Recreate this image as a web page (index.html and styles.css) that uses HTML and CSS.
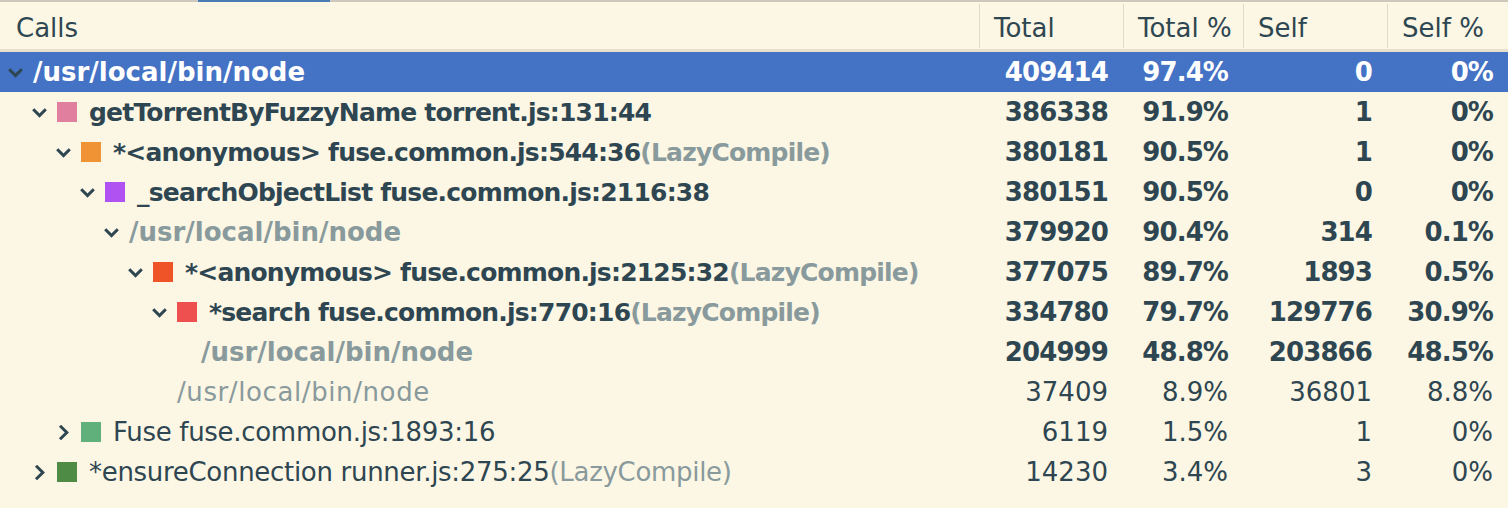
FILE: index.html
```html
<!DOCTYPE html>
<html>
<head>
<meta charset="utf-8">
<link rel="stylesheet" href="styles.css">
</head>
<body>
<div class="topbar"><div class="tab-ind"></div></div>
<div class="table">
  <div class="row head">
    <div class="cell calls">Calls</div>
    <div class="cell hnum">Total</div>
    <div class="cell hnum">Total %</div>
    <div class="cell hnum">Self</div>
    <div class="cell hnum">Self %</div>
  </div>

  <div class="row sel bold">
    <div class="cell calls l0"><svg class="chev" viewBox="0 0 15 15"><polyline points="1.2,4.3 7.5,10.6 13.8,4.3"/></svg><span class="name path">/usr/local/bin/node</span></div>
    <div class="cell num">409414</div><div class="cell num">97.4%</div><div class="cell num">0</div><div class="cell num">0%</div>
  </div>

  <div class="row bold">
    <div class="cell calls l1"><svg class="chev" viewBox="0 0 15 15"><polyline points="1.2,4.3 7.5,10.6 13.8,4.3"/></svg><span class="sq pink"></span><span class="name">getTorrentByFuzzyName torrent.js:131:44</span></div>
    <div class="cell num">386338</div><div class="cell num">91.9%</div><div class="cell num">1</div><div class="cell num">0%</div>
  </div>

  <div class="row bold">
    <div class="cell calls l2"><svg class="chev" viewBox="0 0 15 15"><polyline points="1.2,4.3 7.5,10.6 13.8,4.3"/></svg><span class="sq orange"></span><span class="name">*&lt;anonymous&gt; fuse.common.js:544:36<span class="dim">(LazyCompile)</span></span></div>
    <div class="cell num">380181</div><div class="cell num">90.5%</div><div class="cell num">1</div><div class="cell num">0%</div>
  </div>

  <div class="row bold">
    <div class="cell calls l3"><svg class="chev" viewBox="0 0 15 15"><polyline points="1.2,4.3 7.5,10.6 13.8,4.3"/></svg><span class="sq purple"></span><span class="name">_searchObjectList fuse.common.js:2116:38</span></div>
    <div class="cell num">380151</div><div class="cell num">90.5%</div><div class="cell num">0</div><div class="cell num">0%</div>
  </div>

  <div class="row bold">
    <div class="cell calls l4"><svg class="chev" viewBox="0 0 15 15"><polyline points="1.2,4.3 7.5,10.6 13.8,4.3"/></svg><span class="name path dim">/usr/local/bin/node</span></div>
    <div class="cell num">379920</div><div class="cell num">90.4%</div><div class="cell num">314</div><div class="cell num">0.1%</div>
  </div>

  <div class="row bold">
    <div class="cell calls l5"><svg class="chev" viewBox="0 0 15 15"><polyline points="1.2,4.3 7.5,10.6 13.8,4.3"/></svg><span class="sq vermilion"></span><span class="name">*&lt;anonymous&gt; fuse.common.js:2125:32<span class="dim">(LazyCompile)</span></span></div>
    <div class="cell num">377075</div><div class="cell num">89.7%</div><div class="cell num">1893</div><div class="cell num">0.5%</div>
  </div>

  <div class="row bold">
    <div class="cell calls l6"><svg class="chev" viewBox="0 0 15 15"><polyline points="1.2,4.3 7.5,10.6 13.8,4.3"/></svg><span class="sq red"></span><span class="name">*search fuse.common.js:770:16<span class="dim">(LazyCompile)</span></span></div>
    <div class="cell num">334780</div><div class="cell num">79.7%</div><div class="cell num">129776</div><div class="cell num">30.9%</div>
  </div>

  <div class="row bold">
    <div class="cell calls l7"><span class="chev-space"></span><span class="name path dim">/usr/local/bin/node</span></div>
    <div class="cell num">204999</div><div class="cell num">48.8%</div><div class="cell num">203866</div><div class="cell num">48.5%</div>
  </div>

  <div class="row">
    <div class="cell calls l6"><span class="chev-space"></span><span class="name path dim">/usr/local/bin/node</span></div>
    <div class="cell num">37409</div><div class="cell num">8.9%</div><div class="cell num">36801</div><div class="cell num">8.8%</div>
  </div>

  <div class="row">
    <div class="cell calls l2"><svg class="chev" viewBox="0 0 15 15"><polyline points="4,0.8 10.8,7.5 4,14.2"/></svg><span class="sq green"></span><span class="name">Fuse fuse.common.js:1893:16</span></div>
    <div class="cell num">6119</div><div class="cell num">1.5%</div><div class="cell num">1</div><div class="cell num">0%</div>
  </div>

  <div class="row">
    <div class="cell calls l1"><svg class="chev" viewBox="0 0 15 15"><polyline points="4,0.8 10.8,7.5 4,14.2"/></svg><span class="sq dkgreen"></span><span class="name">*ensureConnection runner.js:275:25<span class="dim">(LazyCompile)</span></span></div>
    <div class="cell num">14230</div><div class="cell num">3.4%</div><div class="cell num">3</div><div class="cell num">0%</div>
  </div>
</div>
</body>
</html>
```

FILE: styles.css
```css
html, body {
  margin: 0;
  padding: 0;
  background: #fcf6e4;
}
body {
  width: 1508px;
  height: 508px;
  overflow: hidden;
  font-family: "DejaVu Sans", Verdana, sans-serif;
  font-size: 26px;
  color: #2e4651;
}
.topbar {
  height: 2px;
  background: #ccc8bc;
}
.tab-ind {
  margin-left: 198px;
  width: 132px;
  height: 2px;
  background: #4a7bb7;
}
.table {
  display: flex;
  flex-direction: column;
}
.row {
  display: grid;
  grid-template-columns: 979px 144px 120px 144px 121px;
  height: 40px;
  align-items: center;
}
.row.head {
  height: 47px;
  border-bottom: 3px solid #e7e0cd;
  align-items: start;
}
.head .cell {
  height: 44px;
  margin-top: 2px;
  display: flex;
  align-items: center;
  padding-left: 15px;
  padding-top: 3px;
  box-sizing: border-box;
}
.head .cell.hnum {
  border-left: 1px solid #e1dac8;
  padding-left: 14px;
}
.head .calls {
  padding-left: 16px;
}
.cell {
  white-space: nowrap;
  overflow: hidden;
}
.num {
  text-align: right;
  padding-right: 15px;
}
.name {
  letter-spacing: -0.3px;
}
.bold .cell {
  font-weight: bold;
  letter-spacing: -0.9px;
}
.bold .name {
  font-size: 25px;
  letter-spacing: -0.8px;
}
.bold .name.path {
  font-size: 26px;
  letter-spacing: 0;
}
.name.path {
  letter-spacing: 0.6px;
}
.calls {
  display: flex;
  align-items: center;
}
.l0 { padding-left: 8px; }
.l1 { padding-left: 32px; }
.l2 { padding-left: 56px; }
.l3 { padding-left: 80px; }
.l4 { padding-left: 104px; }
.l5 { padding-left: 128px; }
.l6 { padding-left: 152px; }
.l7 { padding-left: 176px; }
.chev, .chev-space {
  width: 15px;
  height: 15px;
  flex: none;
  margin-right: 10px;
}
.chev polyline {
  fill: none;
  stroke: #2e4651;
  stroke-width: 3;
}
.sq {
  width: 20px;
  height: 20px;
  flex: none;
  margin-right: 12px;
}
.pink { background: #e17f9f; }
.orange { background: #f09334; }
.purple { background: #b052f2; }
.vermilion { background: #ef5428; }
.red { background: #ee5050; }
.green { background: #5fb07a; }
.dkgreen { background: #4e8c46; }
.dim { color: #899a9d; }
.sel {
  background: #4472c4;
  color: #ffffff;
}
```
